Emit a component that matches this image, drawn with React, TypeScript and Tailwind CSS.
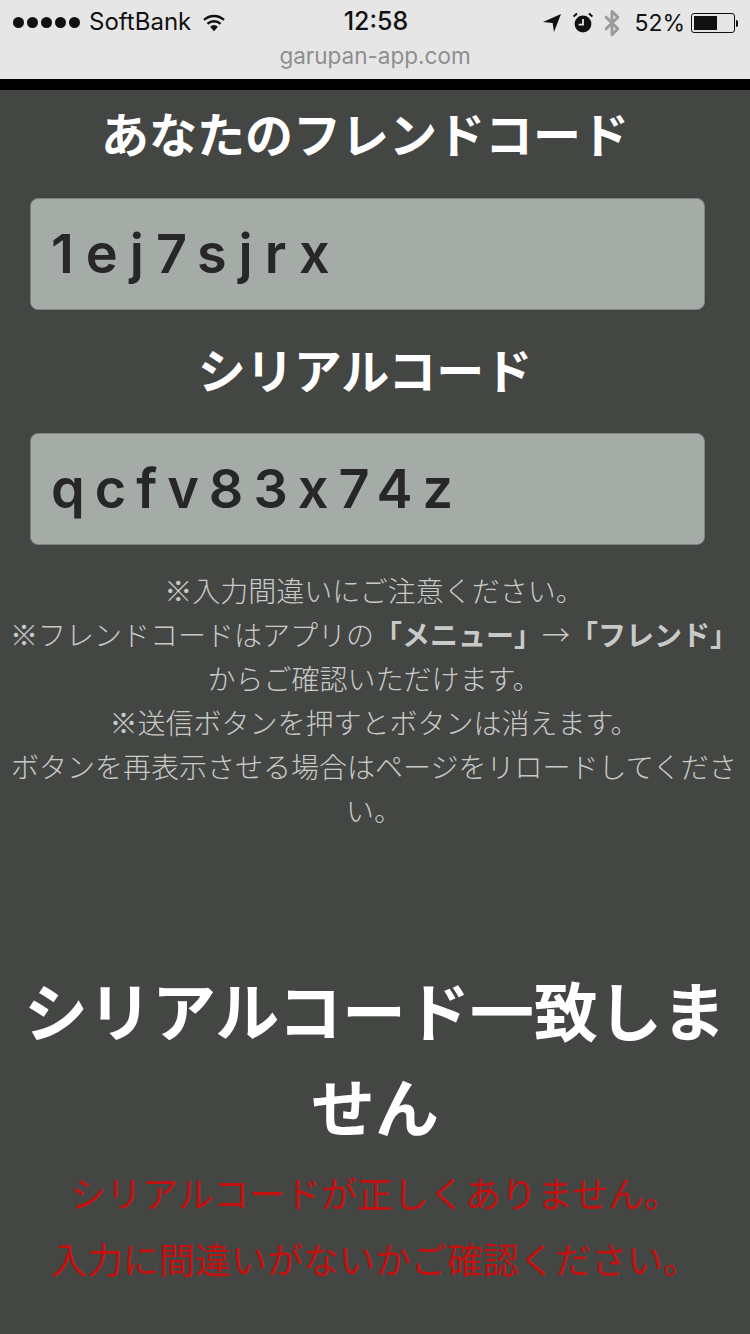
import { Bluetooth } from 'lucide-react';

const jp = "font-['Noto_Sans_CJK_JP',sans-serif]";
const latin = "font-['Inter',sans-serif]";

function WifiIcon() {
    return (
        <svg width="24" height="19" viewBox="0 0 26 20" className="ml-[11px]">
            <path d="M13 19.5 L8.8 14.6 A6.4 6.4 0 0 1 17.2 14.6 Z" fill="#111" />
            <path d="M5.9 11.4 A10.6 10.6 0 0 1 20.1 11.4" stroke="#111" strokeWidth="2.6" fill="none" />
            <path d="M2.2 7.2 A15.8 15.8 0 0 1 23.8 7.2" stroke="#111" strokeWidth="2.6" fill="none" />
        </svg>
    );
}

function LocationIcon() {
    return (
        <svg width="18" height="20" viewBox="0 0 18 20">
            <path d="M0 9 L18 1 L11 19 L9.6 10 Z" fill="#111" />
        </svg>
    );
}

function AlarmIcon() {
    return (
        <svg width="20" height="22" viewBox="0 0 20 22">
            <circle cx="10" cy="12" r="8.4" fill="#111" />
            <path d="M10 7 V12.6 H5.6" stroke="#e7e7e6" strokeWidth="1.8" fill="none" />
            <path d="M0.6 4.6 L4 1.4 M19.4 4.6 L16 1.4" stroke="#111" strokeWidth="2" />
        </svg>
    );
}

function StatusBar() {
    return (
        <div className="h-[79px] bg-[#e7e6e6] text-[#111]">
            <div className="relative h-[43px]">
                <div className="absolute left-[13px] top-[10px] flex items-center">
                    <div className="flex gap-[3px]">
                        {[0, 1, 2, 3, 4].map((i) => (
                            <span key={i} className="w-[11px] h-[11px] rounded-full bg-[#111]" />
                        ))}
                    </div>
                    <span className={`ml-[9px] text-[24px] leading-[24px] ${latin}`}>SoftBank</span>
                    <WifiIcon />
                </div>
                <div className={`absolute left-[2px] right-0 top-[9px] text-center text-[25px] leading-[24px] font-medium ${latin}`}>12:58</div>
                <div className="absolute right-[12px] top-[9px] flex items-center">
                    <LocationIcon />
                    <div className="ml-[12px]">
                        <AlarmIcon />
                    </div>
                    <Bluetooth size={28} color="#9a9a9a" strokeWidth={2.5} className="ml-[5px]" />
                    <span className={`ml-[8px] text-[23px] leading-[24px] ${latin}`}>52%</span>
                    <div className="ml-[6px] w-[44px] h-[20px] border border-[#111] rounded-[3px] p-[2px]">
                        <div className="w-[23px] h-full bg-[#111]" />
                    </div>
                    <div className="ml-[1px] w-[2px] h-[7px] bg-[#111] rounded-r-sm" />
                </div>
            </div>
            <div className={`text-center text-[22.5px] leading-[26px] text-[#8e8e8e] ${latin}`}>garupan-app.com</div>
        </div>
    );
}

function CodeField({ value, wide }: { value: string; wide?: boolean }) {
    return (
        <div className="ml-[30px] w-[675px] h-[112px] rounded-[8px] bg-[#a5aba6] border border-[#7d837f] flex items-center pl-[20px]">
            <span className={`text-[54px] leading-none font-semibold text-[#262726] ${wide ? 'tracking-[12px]' : 'tracking-[10px]'} ${latin}`}>{value}</span>
        </div>
    );
}

export default function App() {
    return (
        <div className={`w-[750px] h-[1334px] overflow-hidden bg-[#444644] ${jp}`}>
            <StatusBar />
            <div className="h-[11px] bg-black" />

            <h2 className="mt-[12px] w-[730px] text-center text-[48px] leading-[60px] font-bold text-white">あなたのフレンドコード</h2>
            <div className="mt-[36px]">
                <CodeField value="1ej7sjrx" wide />
            </div>
            <h2 className="mt-[28px] w-[730px] text-center text-[48px] leading-[60px] font-bold text-white">シリアルコード</h2>
            <div className="mt-[35px]">
                <CodeField value="qcfv83x74z" />
            </div>

            <div className="mt-[23px] ml-[9px] w-[730px] text-center text-[28px] leading-[44px] font-light text-[#c8cac8]">
                <p>※入力間違いにご注意ください。</p>
                <p>
                    ※フレンドコードはアプリの<b className="font-bold">「メニュー」</b>→<b className="font-bold">「フレンド」</b>からご確認いただけます。
                </p>
                <p>※送信ボタンを押すとボタンは消えます。</p>
                <p>ボタンを再表示させる場合はページをリロードしてください。</p>
            </div>

            <h1 className="mt-[128px] px-[20px] text-center text-[64px] leading-[96px] font-bold text-white">シリアルコード一致しません</h1>
            <div className="mt-[7px] text-center text-[36px] leading-[66px] text-[#c4100f]">
                <p>シリアルコードが正しくありません。</p>
                <p>入力に間違いがないかご確認ください。</p>
            </div>
        </div>
    );
}
